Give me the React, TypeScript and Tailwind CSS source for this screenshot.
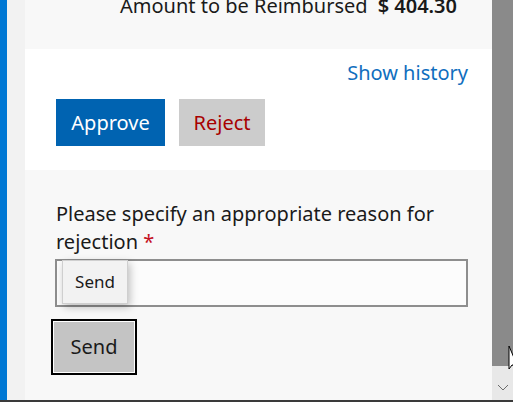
import React from "react";

export default function App() {
  const font = { fontFamily: '"Noto Sans", "Open Sans", sans-serif' };
  return (
    <div className="w-[513px] h-[402px] overflow-hidden flex flex-col relative" style={font}>
      <div className="flex flex-1 min-h-0">
        <div className="w-[7px] bg-[#0078d4]" />
        <div className="w-[18px] bg-[#f2f2f2]" />
        <div className="w-[467px] flex flex-col">
          <div className="h-[49px] bg-[#f8f8f8] flex justify-end pr-[35px] overflow-hidden">
            <div className="mt-[-7px] text-[20px] leading-[26px] text-[#1a1a1a] whitespace-nowrap">
              Amount to be Reimbursed<span className="ml-[10px] font-semibold">$ 404.30</span>
            </div>
          </div>
          <div className="h-[121px] bg-white flex flex-col pl-[31px] pr-[24px]">
            <div className="flex justify-end mt-[10px]">
              <span className="text-[20px] leading-[27px] text-[#106ebe]">Show history</span>
            </div>
            <div className="flex gap-[14px] mt-[13px]">
              <button className="w-[109px] h-[47px] bg-[#0063b1] text-white text-[20px]">Approve</button>
              <button className="w-[86px] h-[47px] bg-[#cccccc] text-[#a80000] text-[20px]">Reject</button>
            </div>
          </div>
          <div className="flex-1 bg-[#f8f8f8] pl-[30px] pr-[24px] pt-[30px]">
            <div className="text-[20px] leading-[28px] text-[#1a1a1a] pl-[1px]">
              Please specify an appropriate reason for rejection <span className="text-[#c50f1f]">*</span>
            </div>
            <div className="relative mt-[3px] h-[48px] border-2 border-[#8e8e8e] bg-[#fcfcfc]">
              <div className="absolute left-[5px] top-[-1px] w-[66px] h-[44px] bg-[#f2f2f2] border border-[#cfcfcf] shadow-[2px_3px_8px_rgba(0,0,0,0.25)] flex items-center justify-center text-[17px] text-[#1a1a1a]">
                Send
              </div>
            </div>
            <button className="mt-[12px] ml-[-4px] w-[86px] h-[56px] border-2 border-black bg-[#c4c4c4] text-[20px] text-[#1a1a1a] shadow-[inset_0_0_0_1px_#ffffff] flex items-center justify-center">
              Send
            </button>
          </div>
        </div>
        <div className="w-[21px] flex flex-col">
          <div className="h-[366px] bg-[#8a8a8a]" />
          <div className="flex-1 bg-[#e8e8e8] flex items-end justify-center pb-[8px]">
            <svg width="12" height="8" viewBox="0 0 12 8">
              <path d="M1 1 L6 6 L11 1" fill="none" stroke="#6b6b6b" strokeWidth="1" />
            </svg>
          </div>
        </div>
      </div>
      <div className="h-[2px] bg-[#3a3a3a]" />
      <svg className="absolute left-[508px] top-[345px]" width="10" height="26" viewBox="0 0 10 26">
        <path d="M1 1 L1 24 L4 20 L9 20 Z" fill="#ffffff" stroke="#000000" strokeWidth="1" />
      </svg>
    </div>
  );
}
